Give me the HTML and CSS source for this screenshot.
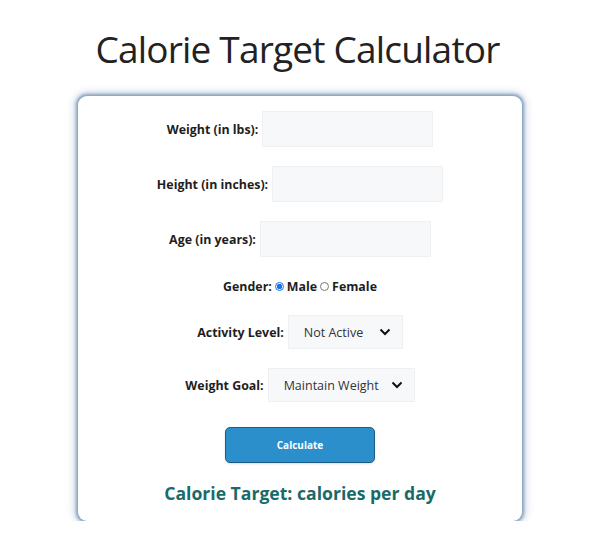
FILE: index.html
```html
<!DOCTYPE html>
<html>
<head>
<meta charset="utf-8">
<link rel="stylesheet" href="styles.css">
</head>
<body>
<h1 class="title">Calorie Target Calculator</h1>
<div class="card">
  <div class="row row-weight">
    <label class="label">Weight (in lbs):</label>
    <input class="field" type="text">
  </div>
  <div class="row row-height">
    <label class="label">Height (in inches):</label>
    <input class="field" type="text">
  </div>
  <div class="row row-age">
    <label class="label">Age (in years):</label>
    <input class="field" type="text">
  </div>
  <div class="row row-gender">
    <span class="label">Gender:</span>
    <span class="radio checked"></span>
    <span class="label">Male</span>
    <span class="radio"></span>
    <span class="label">Female</span>
  </div>
  <div class="row row-activity">
    <label class="label">Activity Level:</label>
    <div class="select sel-activity">
      <span>Not Active</span>
      <svg class="chev" width="12" height="8" viewBox="0 0 12 8"><path d="M1.5 1.5 L6 6 L10.5 1.5" fill="none" stroke="#111" stroke-width="2"/></svg>
    </div>
  </div>
  <div class="row row-goal">
    <label class="label">Weight Goal:</label>
    <div class="select sel-goal">
      <span>Maintain Weight</span>
      <svg class="chev" width="12" height="8" viewBox="0 0 12 8"><path d="M1.5 1.5 L6 6 L10.5 1.5" fill="none" stroke="#111" stroke-width="2"/></svg>
    </div>
  </div>
  <div class="row row-btn">
    <button class="btn">Calculate</button>
  </div>
  <div class="result">Calorie Target: calories per day</div>
</div>
</body>
</html>
```
FILE: styles.css
```css
html, body {
  margin: 0;
  padding: 0;
  background: #fff;
}
body {
  font-family: "Open Sans", "Liberation Sans", sans-serif;
  color: #222;
}
.title {
  margin: 0;
  padding-top: 24px;
  height: 96px;
  box-sizing: border-box;
  text-align: center;
  font-weight: 400;
  font-size: 37px;
  line-height: 50px;
  color: #222;
  letter-spacing: -0.8px;
}
.card {
  width: 444px;
  margin-left: 78px;
  box-sizing: border-box;
  height: 425px;
  background: #fff;
  border-radius: 9px;
  box-shadow: 0 0 3px 2px rgba(110, 140, 175, 0.75), 0 0 9px 3px rgba(120, 150, 190, 0.45);
  padding-top: 15px;
  display: flex;
  flex-direction: column;
  align-items: center;
}
.row {
  display: flex;
  align-items: center;
  justify-content: center;
  gap: 4px;
}
.label {
  font-weight: 700;
  font-size: 12.4px;
  color: #1e1e1e;
}
.field {
  width: 171px;
  height: 36px;
  box-sizing: border-box;
  border: 1px solid #eef0f2;
  background: #f7f8fa;
  margin: 0;
  padding: 0;
}
.row-height, .row-age { margin-top: 19px; }
.row-gender { margin-top: 21px; height: 17px; gap: 3px; }
.row-activity { margin-top: 20px; }
.row-goal { margin-top: 19px; }
.row-btn { margin-top: 25px; }
.radio {
  width: 9px;
  height: 9px;
  box-sizing: border-box;
  border: 1px solid #777;
  border-radius: 50%;
  background: #fff;
}
.radio.checked {
  border-color: #1a73e8;
  background: radial-gradient(circle, #1a73e8 0 2.5px, #fff 3px);
}
.select {
  height: 34px;
  box-sizing: border-box;
  background: #f7f8fa;
  border: 1px solid #eef0f2;
  display: flex;
  align-items: center;
  justify-content: space-between;
  padding: 0 11px 0 15px;
  font-size: 12.5px;
  color: #333;
}
.sel-activity { width: 115px; }
.sel-goal { width: 147px; }
.btn {
  width: 150px;
  height: 36px;
  background: #2a8fca;
  border: 1px solid #1f5c85;
  border-radius: 5px;
  color: #fff;
  font-family: "Open Sans", sans-serif;
  font-weight: 700;
  font-size: 10px;
  box-shadow: 0 1px 2px rgba(0,0,0,0.15);
}
.result {
  margin-top: 19px;
  font-weight: 700;
  font-size: 17.6px;
  color: #1a6a6a;
  line-height: 22px;
}
```
